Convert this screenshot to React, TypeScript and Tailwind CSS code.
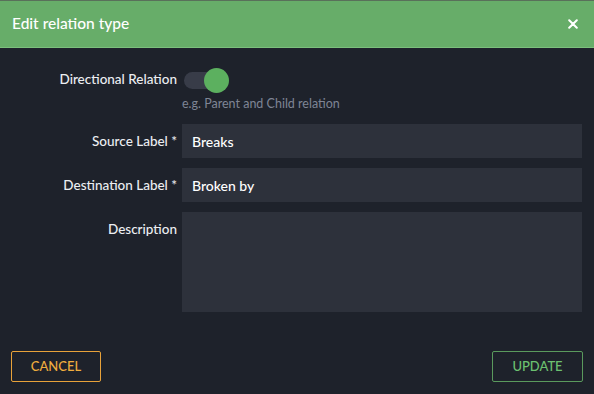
import * as React from "react"

const font = { fontFamily: '"Source Sans Pro", Lato, "Noto Sans", sans-serif' }

function FieldRow({ label, children }: { label: string; children: React.ReactNode }) {
  return (
    <div className="flex items-start gap-[5px]">
      <label className="w-[177px] shrink-0 pt-[7px] text-right text-[13.5px] font-medium leading-[20px] text-[#eceef2]">{label}</label>
      <div className="flex-1">{children}</div>
    </div>
  )
}

export default function App() {
  const [directional, setDirectional] = React.useState(true)

  return (
    <div className="flex h-[394px] w-[594px] flex-col bg-[#1e222b]" style={font}>
      {/* Header */}
      <div className="flex h-[48px] items-center justify-between border-t border-[#59705a] border-b border-b-[#7cc07d] bg-[#67ad69] pl-[12px] pr-[16px]">
        <h1 className="text-[15.5px] font-medium text-white">Edit relation type</h1>
        <button className="text-white">
          <svg width="10" height="10" viewBox="0 0 10 10">
            <path d="M1.2 1.2l7.6 7.6M8.8 1.2l-7.6 7.6" stroke="currentColor" strokeWidth="2" strokeLinecap="round" />
          </svg>
        </button>
      </div>

      {/* Body */}
      <div className="flex flex-col gap-[10px] pr-[12px] pt-[20px]">
        <div className="flex items-start gap-[5px]">
          <label className="w-[177px] shrink-0 pt-[1px] text-right text-[13.5px] font-medium leading-[20px] text-[#eceef2]">
            Directional Relation
          </label>
          <div className="flex flex-col">
            <button
              onClick={() => setDirectional(!directional)}
              className="relative ml-[2px] h-[25px] w-[46px]"
            >
              <span className="absolute left-0 top-[4px] h-[17px] w-[34px] rounded-full bg-[#383c48]" />
              <span
                className={
                  directional
                    ? "absolute left-[20px] top-0 h-[25px] w-[25px] rounded-full bg-[#5cb05f]"
                    : "absolute left-0 top-0 h-[25px] w-[25px] rounded-full bg-[#9aa0aa]"
                }
              />
            </button>
            <span className="mt-[1px] text-[12.5px] leading-[20px] text-[#7f8595]">e.g. Parent and Child relation</span>
          </div>
        </div>

        <FieldRow label="Source Label *">
          <input
            defaultValue="Breaks"
            className="h-[34px] w-full bg-[#2d313b] px-[10px] text-[14px] font-medium text-white outline-none"
          />
        </FieldRow>

        <FieldRow label="Destination Label *">
          <input
            defaultValue="Broken by"
            className="h-[34px] w-full bg-[#2d313b] px-[10px] text-[14px] font-medium text-white outline-none"
          />
        </FieldRow>

        <FieldRow label="Description">
          <textarea className="block h-[100px] w-full resize-none bg-[#2d313b] px-[10px] py-[6px] text-[14px] text-white outline-none" />
        </FieldRow>
      </div>

      {/* Footer */}
      <div className="mt-auto flex justify-between px-[11px] pb-[12px]">
        <button className="h-[31px] w-[90px] rounded-[2px] border border-[#e8a23a] text-[13px] font-medium text-[#f0ad3e]">
          CANCEL
        </button>
        <button className="h-[31px] w-[91px] rounded-[2px] border border-[#5a9a5d] text-[13px] font-medium text-[#6cc070]">
          UPDATE
        </button>
      </div>
    </div>
  )
}
